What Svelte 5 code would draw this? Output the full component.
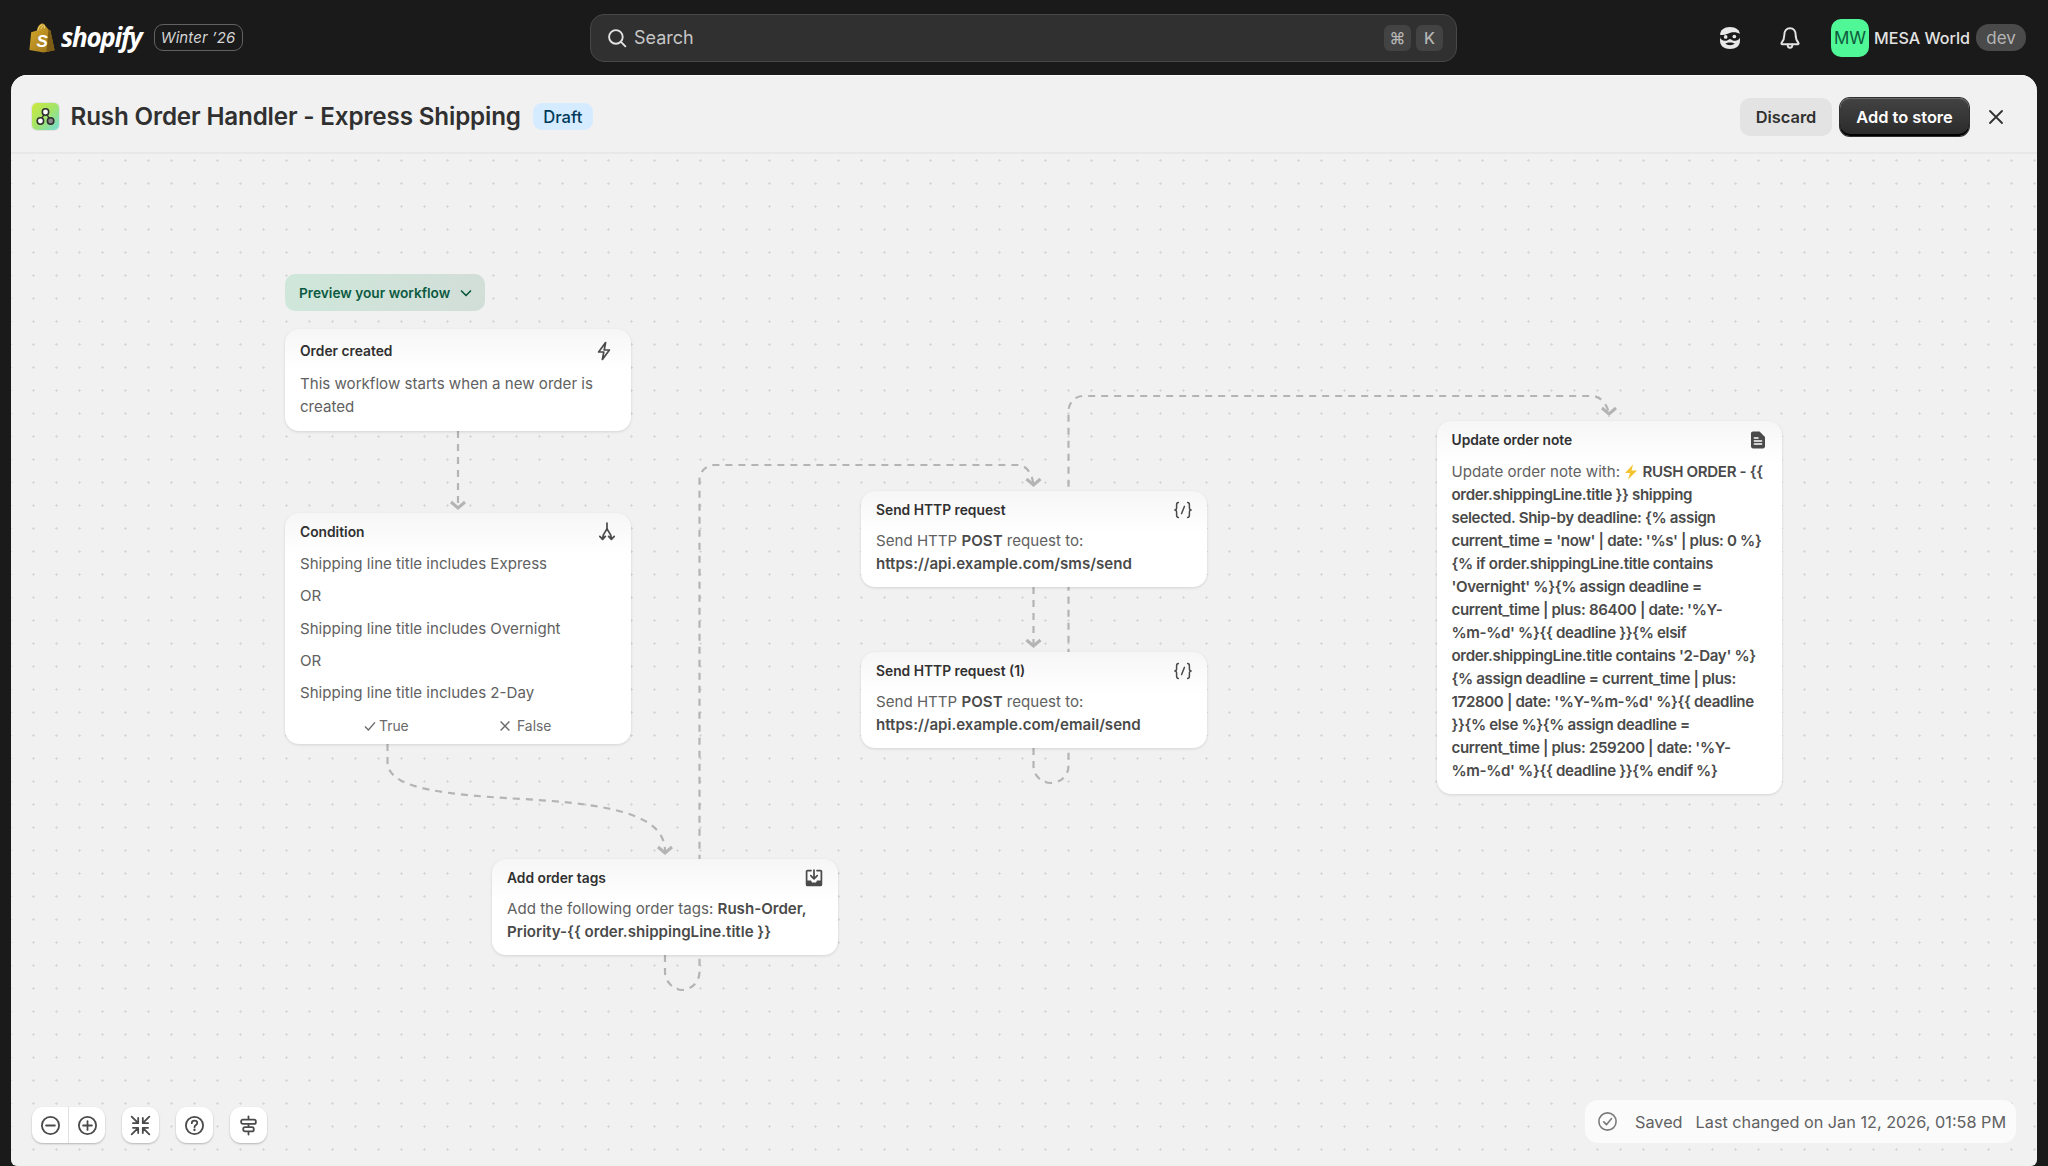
<script>
  const ox = 11;
  const oy = 154;
  const nodes = [
    { x: 285, y: 329, w: 346, h: 102, title: 'Order created', icon: 'bolt', kind: 'trigger' },
    { x: 285, y: 513, w: 346, h: 231, title: 'Condition', icon: 'branch', kind: 'condition' },
    { x: 492, y: 859, w: 346, h: 96, title: 'Add order tags', icon: 'tag', kind: 'tags' },
    { x: 861, y: 491, w: 346, h: 96, title: 'Send HTTP request', icon: 'code', kind: 'http', url: 'https://api.example.com/sms/send' },
    { x: 861, y: 652, w: 346, h: 96, title: 'Send HTTP request (1)', icon: 'code', kind: 'http', url: 'https://api.example.com/email/send' },
    { x: 1436.5, y: 421, w: 345, h: 373, title: 'Update order note', icon: 'doc', kind: 'note' }
  ];
  const noteLines = [
    'order.shippingLine.title }} shipping',
    'selected. Ship-by deadline: {% assign',
    "current_time = 'now' | date: '%s' | plus: 0 %}",
    '{% if order.shippingLine.title contains',
    "'Overnight' %}{% assign deadline =",
    "current_time | plus: 86400 | date: '%Y-",
    "%m-%d' %}{{ deadline }}{% elsif",
    "order.shippingLine.title contains '2-Day' %}",
    '{% assign deadline = current_time | plus:',
    "172800 | date: '%Y-%m-%d' %}{{ deadline",
    '}}{% else %}{% assign deadline =',
    "current_time | plus: 259200 | date: '%Y-",
    "%m-%d' %}{{ deadline }}{% endif %}"
  ];
  const edges = [
    'M458 431 L458 506',
    'M387.5 744 L387.5 762 C388 786 430 794 522 799 C612 804 665 815 665 851',
    'M665 955 L665 972 C665 982 674 990 682 990 C691 990 699.5 982 699.5 972 L699.5 480 C699.5 472 706 465 714 465 L1018 465 C1027 465 1033.5 475 1033.5 488',
    'M1033.5 587 L1033.5 649',
    'M1033.5 748 L1033.5 766 C1033.5 776 1042 783 1051 783 C1060 783 1068.5 776 1068.5 766 L1068.5 411 C1068.5 403 1075 396 1083 396 L1592 396 C1601 396 1609 406 1609 417'
  ];
  const arrows = [[458, 507], [665, 852], [1033.5, 484], [1033.5, 645], [1609, 413]];
</script>

<div class="page">
  <header class="topbar">
    <div class="brand">
      <svg class="bag" viewBox="0 0 26 30" aria-hidden="true">
        <defs>
          <linearGradient id="bagGold" x1="0" y1="0" x2="1" y2="1">
            <stop offset="0" stop-color="#d9ab2c" />
            <stop offset="1" stop-color="#96701a" />
          </linearGradient>
        </defs>
        <path d="M2.2 9.2 L8 7.4 C8.6 3 11.2 0.4 13.6 0.4 C14.8 0.4 15.6 1.2 16 2.2 L19.4 6.6 L21.4 7.4 L25.6 27.2 L14.6 29.6 L0.4 27 Z" fill="url(#bagGold)" />
        <path d="M19.4 6.6 L21.4 7.4 L25.6 27.2 L17.6 29 Z" fill="#7e5d14" />
        <path d="M8.8 7.6 C9.6 4 11.4 1.8 13.4 1.6 M12 6.2 C12.6 3.8 14 2.4 15.2 2.6 M15.4 5.4 C15.6 4.4 15.6 3.4 15.2 2.6" fill="none" stroke="#f0d889" stroke-width="0.9" />
        <text x="7.6" y="23.5" class="bag-s">S</text>
      </svg>
      <span class="wordmark">shopify</span>
      <span class="winter">Winter ’26</span>
    </div>
    <div class="search">
      <svg class="search-ico" viewBox="0 0 20 20" aria-hidden="true"><circle cx="9" cy="9" r="6.2" /><path d="M13.6 13.6 L17.6 17.6" /></svg>
      <span class="search-label">Search</span>
      <span class="keys"><kbd>⌘</kbd><kbd>K</kbd></span>
    </div>
    <div class="account">
      <svg class="hdr-ico" viewBox="0 0 24 24" aria-hidden="true">
        <path class="fillw" d="M12 1.9 C6.5 1.9 2.8 4.6 2.8 9.5 L2.8 14.5 C2.8 19.5 6.8 22.1 12 22.1 C17.2 22.1 21.2 19.5 21.2 14.5 L21.2 9.5 C21.2 4.6 17.5 1.9 12 1.9 Z" />
        <path class="dark" d="M2.8 9 C7 10 10 8 13 7 C16 6.2 19 7 21.2 8 L21.2 11 C21 14 17 15 14.6 14.2 C13.4 13.8 12.8 13 12 13 C11.2 13 10.6 13.8 9.4 14.2 C7 15 3 14 2.8 11 Z" />
        <circle class="fillw" cx="8" cy="11" r="1.7" />
        <circle class="fillw" cx="16" cy="10.6" r="1.7" />
        <path class="dark" d="M7.6 17.4 C10 15.8 14 15.8 16.4 17.4 C14 19 10 19 7.6 17.4 Z" />
      </svg>
      <svg class="hdr-ico bell" viewBox="0 0 24 24" aria-hidden="true">
        <path d="M12 3 C8.6 3 6.8 5.8 6.8 9 C6.8 12.6 6 14.4 4.2 16.6 C3.8 17.2 4.2 17.8 4.8 17.8 L19.2 17.8 C19.8 17.8 20.2 17.2 19.8 16.6 C18 14.4 17.2 12.6 17.2 9 C17.2 5.8 15.4 3 12 3 Z" />
        <path d="M9.8 18 C9.8 20 10.8 21 12 21 C13.2 21 14.2 20 14.2 18" />
      </svg>
      <span class="avatar">MW</span>
      <span class="shop">MESA World</span>
      <span class="dev">dev</span>
    </div>
  </header>

  <main class="panel">
    <div class="head">
      <div class="head-left">
        <span class="app-ico">
          <svg viewBox="0 0 27 27" aria-hidden="true">
            <path d="M13.5 9 L8.4 17.6 M13.5 9 L18.4 17.6" stroke="#303030" stroke-width="1.4" />
            <circle cx="13.5" cy="9" r="3.2" fill="#fff" stroke="#303030" stroke-width="1.6" />
            <circle cx="8.4" cy="18" r="3.2" fill="#fff" stroke="#303030" stroke-width="1.6" />
            <circle cx="18.6" cy="18" r="3.2" fill="#8a8a8a" stroke="#303030" stroke-width="1.6" />
          </svg>
        </span>
        <h1>Rush Order Handler - Express Shipping</h1>
        <span class="draft">Draft</span>
      </div>
      <div class="head-right">
        <button class="btn ghost">Discard</button>
        <button class="btn solid">Add to store</button>
        <svg class="close" viewBox="0 0 20 20" aria-hidden="true"><path d="M4 4 L16 16 M16 4 L4 16" /></svg>
      </div>
    </div>

    <div class="canvas">
      <svg class="wires" width="2026" height="1012" viewBox="{ox} {oy} 2026 1012" aria-hidden="true">
        {#each edges as d}
          <path class="wire" {d} />
        {/each}
        {#each arrows as [x, y]}
          <path class="arrow" d="M{x - 7} {y - 5} L{x} {y + 1} L{x + 7} {y - 5}" />
        {/each}
      </svg>

      <button class="preview" style="left:{285 - ox}px;top:{274 - oy}px">
        Preview your workflow
        <svg viewBox="0 0 16 16" aria-hidden="true"><path d="M3.5 6 L8 10.5 L12.5 6" /></svg>
      </button>

      {#each nodes as n}
        <article class="node" style="left:{n.x - ox}px;top:{n.y - oy}px;width:{n.w}px;height:{n.h}px">
          <div class="node-head {n.kind}">
            <span class="node-title">{n.title}</span>
            {#if n.icon === 'bolt'}
              <svg class="nico bolt" viewBox="0 0 20 20" aria-hidden="true"><path class="line" d="M11.6 1.6 L4.6 11 L9.8 11 L8.4 18.4 L15.4 9 L10.2 9 Z" /></svg>
            {:else if n.icon === 'branch'}
              <svg class="nico" viewBox="0 0 20 20" aria-hidden="true"><path class="line" d="M10 1 L10 6 C10 9.5 5.6 10 5.6 17 M10 6 C10 9.5 14.4 10 14.4 17 M2.8 14.4 L5.6 17.4 L8.4 14.4 M11.6 14.4 L14.4 17.4 L17.2 14.4" /></svg>
            {:else if n.icon === 'tag'}
              <svg class="nico" viewBox="0 0 20 20" aria-hidden="true"><path class="line" d="M7 2.6 L3.6 2.6 C3 2.6 2.6 3 2.6 3.6 L2.6 16.4 C2.6 17 3 17.4 3.6 17.4 L16.4 17.4 C17 17.4 17.4 17 17.4 16.4 L17.4 3.6 C17.4 3 17 2.6 16.4 2.6 L13 2.6" /><path class="solid-ico" d="M3 12.6 L7 12.6 L8 14.4 L12 14.4 L13 12.6 L17 12.6 L17 17 L3 17 Z" /><path class="line" d="M10 2 L10 10.6 M6.8 7.6 L10 10.8 L13.2 7.6" /></svg>
            {:else if n.icon === 'code'}
              <svg class="nico" viewBox="0 0 20 20" aria-hidden="true"><path class="line thin" d="M5.4 2.6 C3.8 2.6 3.6 3.6 3.6 5 L3.6 7.8 C3.6 9 3 10 1.8 10 C3 10 3.6 11 3.6 12.2 L3.6 15 C3.6 16.4 3.8 17.4 5.4 17.4 M14.6 2.6 C16.2 2.6 16.4 3.6 16.4 5 L16.4 7.8 C16.4 9 17 10 18.2 10 C17 10 16.4 11 16.4 12.2 L16.4 15 C16.4 16.4 16.2 17.4 14.6 17.4 M11.4 6.4 L8.6 13.6" /></svg>
            {:else}
              <svg class="nico" viewBox="0 0 20 20" aria-hidden="true"><path class="solid-ico" d="M5 1.6 L11.6 1.6 L17 7 L17 16.6 C17 17.8 16 18.4 15 18.4 L5 18.4 C4 18.4 3 17.8 3 16.6 L3 3.4 C3 2.4 4 1.6 5 1.6 Z" /><path class="cut" d="M6.4 8 L10 8 M6.4 11 L13.6 11 M6.4 14 L13.6 14" /></svg>
            {/if}
          </div>
          <div class="node-body">
            {#if n.kind === 'trigger'}
              <p>This workflow starts when a new order is created</p>
            {:else if n.kind === 'condition'}
              <p class="cond">Shipping line title includes Express</p>
              <p class="cond">OR</p>
              <p class="cond">Shipping line title includes Overnight</p>
              <p class="cond">OR</p>
              <p class="cond last">Shipping line title includes 2-Day</p>
              <div class="outcomes">
                <span class="outcome"><svg viewBox="0 0 16 16" aria-hidden="true"><path d="M3 8.6 L6.4 12 L13 4.4" /></svg>True</span>
                <span class="outcome"><svg viewBox="0 0 16 16" aria-hidden="true"><path d="M3.6 3.6 L12.4 12.4 M12.4 3.6 L3.6 12.4" /></svg>False</span>
              </div>
            {:else if n.kind === 'tags'}
              <p>Add the following order tags: <b>Rush-Order, Priority-&#123;&#123; order.shippingLine.title &#125;&#125;</b></p>
            {:else if n.kind === 'http'}
              <p>Send HTTP <b>POST</b> request to: <b>{n.url}</b></p>
            {:else}
              <div class="note">
                <div>Update order note with: <svg class="zap" viewBox="0 0 14 16" aria-hidden="true"><path d="M9 0.5 L1 9 L6 9 L4 15.5 L13 6.6 L7.6 6.6 Z" /></svg> <b>RUSH ORDER - &#123;&#123;</b></div>
                {#each noteLines as l}
                  <div><b>{l}</b></div>
                {/each}
              </div>
            {/if}
          </div>
        </article>
      {/each}

      <div class="tools">
        <div class="tool group">
          <button aria-label="Zoom out"><svg viewBox="0 0 20 20"><circle cx="10" cy="10" r="8.2" /><path d="M5.8 10 L14.2 10" /></svg></button>
          <button aria-label="Zoom in"><svg viewBox="0 0 20 20"><circle cx="10" cy="10" r="8.2" /><path d="M5.8 10 L14.2 10 M10 5.8 L10 14.2" /></svg></button>
        </div>
        <button class="tool single" aria-label="Fit"><svg viewBox="0 0 20 20"><path d="M1.6 1.6 L7.6 7.6 M7.8 2.8 L7.8 7.8 L2.8 7.8 M18.4 1.6 L12.4 7.6 M12.2 2.8 L12.2 7.8 L17.2 7.8 M1.6 18.4 L7.6 12.4 M7.8 17.2 L7.8 12.2 L2.8 12.2 M18.4 18.4 L12.4 12.4 M12.2 17.2 L12.2 12.2 L17.2 12.2" /></svg></button>
        <button class="tool single" aria-label="Help"><svg viewBox="0 0 20 20"><circle cx="10" cy="10" r="8.2" /><path d="M7.4 7.8 C7.4 6.2 8.6 5.4 10 5.4 C11.4 5.4 12.6 6.2 12.6 7.6 C12.6 9.6 10 9.6 10 11.6" /><path class="dot" d="M10 14 L10 14.4" /></svg></button>
        <button class="tool single" aria-label="Align"><svg viewBox="0 0 20 20"><path d="M10 1.4 L10 18.6" /><rect x="3" y="4.4" width="14" height="4" rx="1.6" fill="#fff" /><rect x="5" y="11.6" width="10" height="4" rx="1.6" fill="#fff" /></svg></button>
      </div>

      <div class="status">
        <svg viewBox="0 0 20 20" aria-hidden="true"><circle cx="10" cy="10" r="8.2" /><path d="M6.4 10.4 L9 13 L13.8 7.2" /></svg>
        <span class="saved">Saved</span>
        <span class="changed">Last changed on Jan 12, 2026, 01:58 PM</span>
      </div>
    </div>
  </main>
</div>

<style>
  :global(body) { margin: 0; background: #1a1a1a; font-family: Inter, "Liberation Sans", sans-serif; }
  .page { width: 2048px; height: 1166px; display: flex; flex-direction: column; overflow: hidden; background: #1a1a1a; }

  .topbar { height: 75px; flex: none; position: relative; display: flex; align-items: center; justify-content: space-between; padding: 0 22px 0 29px; box-sizing: border-box; }
  .brand { display: flex; align-items: center; width: 561px; }
  .bag { width: 26px; height: 30px; margin-right: 6px; flex: none; }
  .bag-s { font: italic 700 17px "Liberation Sans", sans-serif; fill: #fff; }
  .wordmark { font: italic 700 26px "Open Sans", sans-serif; color: #fff; letter-spacing: -1.3px; margin-right: 12px; line-height: 1; position: relative; top: -1px; }
  .winter { border: 1.5px solid #616161; border-radius: 9px; height: 27px; width: 89px; box-sizing: border-box; display: flex; align-items: center; justify-content: center; color: #d4d4d4; font-size: 15px; font-style: italic; letter-spacing: 0.1px; }

  .search { width: 867px; height: 48px; box-sizing: border-box; border: 1.5px solid #474747; border-radius: 14px; background: #303030; display: flex; align-items: center; padding: 0 13px 0 15px; margin-right: auto; }
  .search-ico { width: 22px; height: 22px; fill: none; stroke: #e3e3e3; stroke-width: 1.7; stroke-linecap: round; }
  .search-label { color: #c6c6c6; font-size: 18px; margin-left: 6px; }
  .keys { margin-left: auto; display: flex; gap: 5px; }
  kbd { width: 27px; height: 26px; border-radius: 6px; background: #434343; color: #b5b5b5; font: 500 16px Inter, sans-serif; display: flex; align-items: center; justify-content: center; }

  .account { display: flex; align-items: center; }
  .hdr-ico { width: 26px; height: 26px; margin-right: 34px; }
  .hdr-ico.bell { margin-right: 28px; fill: none; stroke: #e3e3e3; stroke-width: 1.8; stroke-linejoin: round; stroke-linecap: round; }
  .fillw { fill: #e8e8e8; }
  .dark { fill: #1a1a1a; }
  .avatar { width: 38px; height: 38px; border-radius: 10px; background: #4ff796; color: #0d5a3c; font-size: 17px; display: flex; align-items: center; justify-content: center; }
  .shop { color: #e3e3e3; font-size: 16.1px; font-weight: 500; margin-left: 5px; }
  .dev { background: #4a4a4a; color: #b5b5b5; font-size: 17px; border-radius: 13px; width: 50px; height: 27px; display: flex; align-items: center; justify-content: center; margin-left: 6px; }

  .panel { flex: 1; margin: 0 11px; background: #f1f1f1; border-radius: 16px 16px 6px 6px; display: flex; flex-direction: column; min-height: 0; box-shadow: inset 0 1px 0 #fbfbfb; overflow: hidden; }
  .head { height: 71px; padding: 6px 31px 0 21px; flex: none; border-bottom: 2px solid #e8e8e8; display: flex; align-items: center; justify-content: space-between; }
  .head-left { display: flex; align-items: center; }
  .app-ico { width: 27px; height: 27px; border-radius: 5px; background: linear-gradient(135deg, #cdea3f 0%, #a3e46a 50%, #72dcd9 100%); box-shadow: 0 0 0 1px #e2e2e2; display: block; }
  .app-ico svg { display: block; width: 27px; height: 27px; }
  h1 { margin: 0 12px 0 11.5px; font-size: 24.2px; font-weight: 600; color: #303030; letter-spacing: -0.15px; white-space: nowrap; }
  .draft { background: #d5ebff; color: #003a5a; font-size: 16.6px; font-weight: 500; border-radius: 9px; width: 60px; height: 27px; display: flex; align-items: center; justify-content: center; }

  .head-right { display: flex; align-items: center; }
  .btn { height: 38px; border: none; border-radius: 10px; font: 600 16.4px Inter, sans-serif; padding: 0; }
  .btn.ghost { width: 92px; background: #e3e3e3; color: #303030; margin-right: 8px; }
  .btn.solid { width: 129px; color: #fff; background: linear-gradient(#434343, #2a2a2a); box-shadow: inset 0 -2px 0 #000, inset 0 1px 0 #666, 0 0 0 1px #303030; }
  .close { width: 20px; height: 20px; margin-left: 17px; fill: none; stroke: #303030; stroke-width: 1.8; stroke-linecap: round; }

  .canvas { flex: 1; position: relative; min-height: 0; background-image: radial-gradient(circle at 1.5px 1.5px, #d8d8d8 1.1px, transparent 1.4px); background-size: 23px 23px; background-position: 21px 5px; }
  .wires { position: absolute; left: 0; top: 0; }
  .wire { fill: none; stroke: #b4b4b4; stroke-width: 2.2; stroke-dasharray: 7 6; }
  .arrow { fill: none; stroke: #b4b4b4; stroke-width: 3; }

  .preview { position: absolute; width: 200px; height: 37px; border: none; border-radius: 10px; background: linear-gradient(100deg, #cfe7da, #d2ded8); color: #0c5a42; font: 600 13.7px Inter, sans-serif; display: flex; align-items: center; gap: 7px; padding: 0 0 0 14px; white-space: nowrap; }
  .preview svg { width: 16px; height: 16px; fill: none; stroke: #0c5a42; stroke-width: 1.7; stroke-linecap: round; stroke-linejoin: round; margin-left: 1px; }

  .node { position: absolute; box-sizing: border-box; background: #fff; border-radius: 14px; padding: 0 15px; background-image: linear-gradient(#f6f6f6, #ffffff 42px); box-shadow: 0 1px 3px rgba(0, 0, 0, 0.12); }
  .node-head { display: flex; align-items: center; justify-content: space-between; height: 37.5px; box-sizing: border-box; }
  .node-head.trigger { height: 43px; }
  .node-head.condition { height: 39px; padding-bottom: 1px; }
  .node-head.note { height: 38.5px; }
  .node-title { font-size: 13.8px; font-weight: 600; color: #303030; }
  .nico { width: 20px; height: 20px; flex: none; margin-right: -1px; }
  .nico.bolt { margin-right: 2px; }
  .line { fill: none; stroke: #4a4a4a; stroke-width: 1.7; stroke-linejoin: round; stroke-linecap: round; }
  .line.thin { stroke-width: 1.5; }
  .solid-ico { fill: #4a4a4a; }
  .cut { stroke: #fff; stroke-width: 1.6; stroke-linecap: round; fill: none; }

  .node-body { font-size: 15.1px; line-height: 23px; color: #616161; }
  .node-body p { margin: 0; }
  .node-body b { font-weight: 600; color: #4a4a4a; }
  .note { white-space: nowrap; }
  .note b { letter-spacing: -0.35px; }
  .zap { width: 14px; height: 16px; vertical-align: -3px; fill: #f4c430; }
  .cond { height: 32.25px; }
  .cond.last { height: 23px; }
  .outcomes { display: flex; position: absolute; left: 0; right: 0; bottom: 6px; font-size: 13.9px; line-height: 24px; color: #6a6a6a; }
  .outcome { display: flex; align-items: center; gap: 1px; position: absolute; bottom: 0; }
  .outcome:first-child { left: 77px; }
  .outcome:last-child { left: 212px; gap: 4px; }
  .outcome svg { width: 16px; height: 16px; fill: none; stroke: #6a6a6a; stroke-width: 1.4; }

  .tools { position: absolute; left: 21px; top: 953px; display: flex; gap: 17px; }
  .tool { background: #fff; border: none; border-radius: 11px; height: 36px; box-shadow: 0 1px 2px rgba(0, 0, 0, 0.25); padding: 0; }
  .tool.group { display: flex; width: 73px; }
  .tool.group button { flex: 1; background: none; border: none; padding: 0; display: flex; align-items: center; justify-content: center; }
  .tool.group button + button { border-left: 1px solid #e0e0e0; }
  .tool.single { width: 37px; display: flex; align-items: center; justify-content: center; }
  .tool svg { width: 21px; height: 21px; fill: none; stroke: #4a4a4a; stroke-width: 1.7; stroke-linecap: round; stroke-linejoin: round; }
  .tool .dot { stroke-width: 2.2; }

  .status { position: absolute; left: 1574px; top: 946px; width: 431px; height: 43px; box-sizing: border-box; background: #fbfbfb; border-radius: 13px; display: flex; align-items: center; padding-left: 12px; color: #616161; font-size: 16.25px; }
  .status svg { width: 21px; height: 21px; fill: none; stroke: #7a7a7a; stroke-width: 1.5; stroke-linecap: round; stroke-linejoin: round; }
  .saved { margin-left: 17px; }
  .changed { margin-left: 13px; white-space: nowrap; }
</style>
